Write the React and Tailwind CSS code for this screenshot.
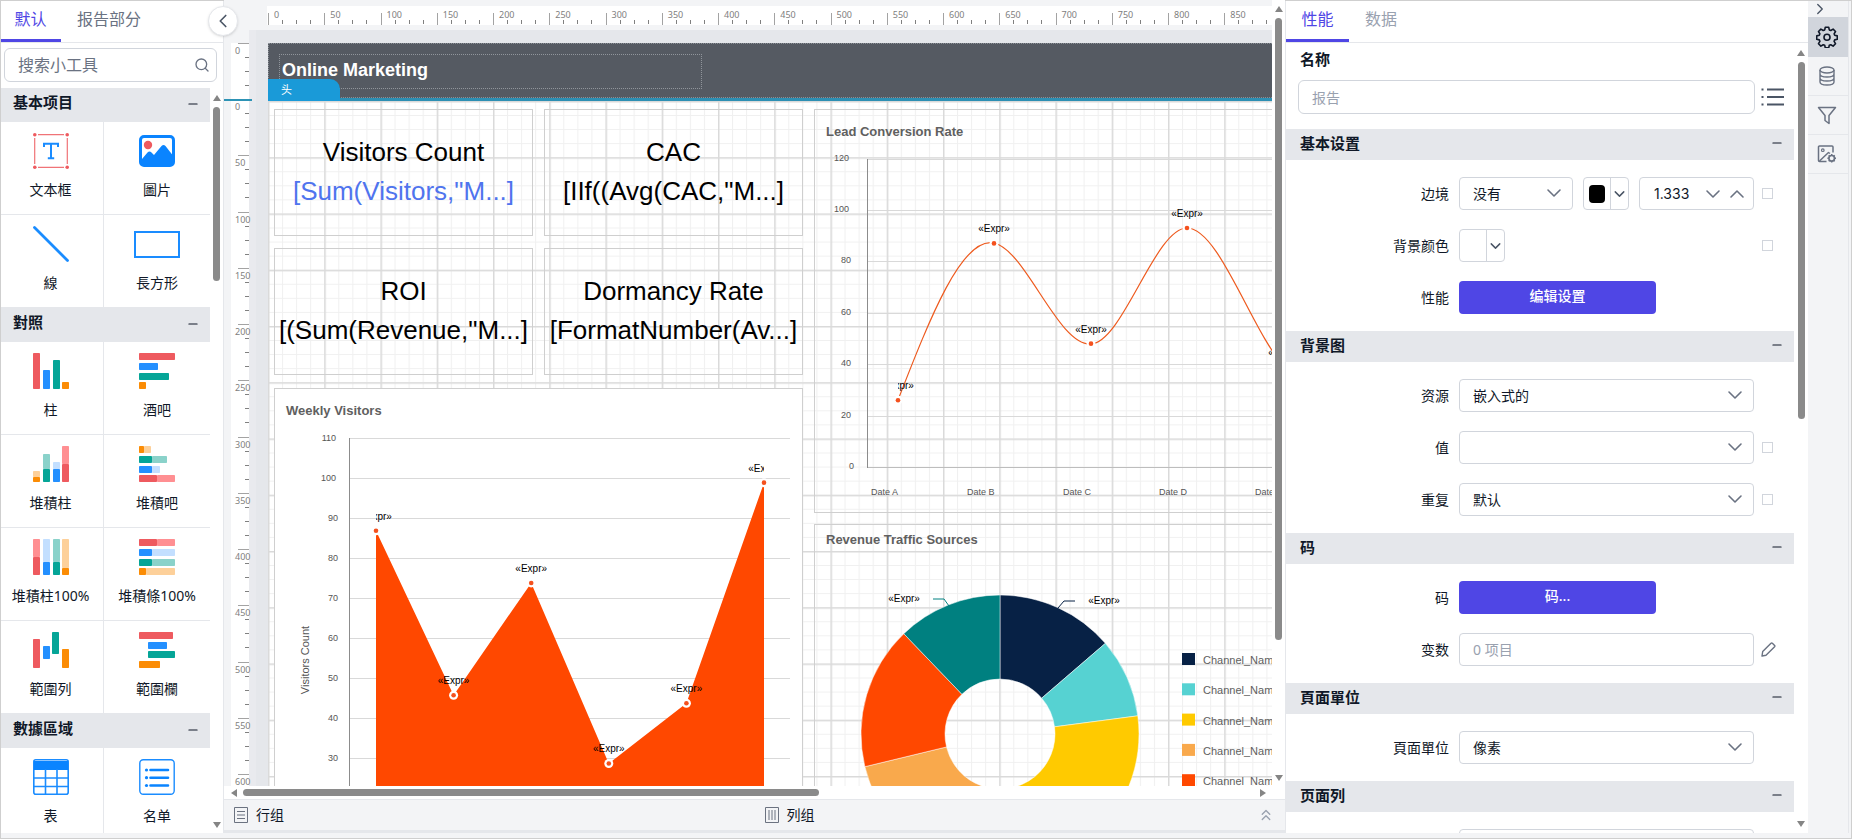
import { ChevronDown, ChevronLeft, ChevronRight, ChevronUp, ChevronsUp, Minus, Search } from 'lucide-react'

const RED = '#ee5a5f'
const RED_SOFT = '#ff8f92'
const BLUE = '#2490ff'
const BLUE_SOFT = '#c3dfff'
const TEAL = '#05a597'
const TEAL_SOFT = '#8ad2ca'
const AMBER = '#fb8c05'
const AMBER_SOFT = '#fdd09a'

// [x, y, width, height, color]
const bars = {
  column: [[0, 0, 7, 36, RED], [10, 17, 7, 19, BLUE], [20, 7, 7, 29, TEAL], [29, 29, 7, 7, AMBER]],
  bar: [[0, 0, 36, 7, RED], [0, 10, 19, 7, BLUE], [0, 20, 30, 7, TEAL], [0, 29, 7, 7, AMBER]],
  stackedColumn: [
    [0, 25, 7, 6, AMBER_SOFT], [0, 31, 7, 5, AMBER],
    [10, 8, 7, 15, TEAL_SOFT], [10, 23, 7, 13, TEAL],
    [20, 16, 7, 7, BLUE_SOFT], [20, 23, 7, 13, BLUE],
    [29, 0, 7, 18, RED_SOFT], [29, 18, 7, 18, RED],
  ],
  stackedBar: [
    [0, 0, 5, 7, AMBER], [5, 0, 7, 7, AMBER_SOFT],
    [0, 10, 13, 7, TEAL], [13, 10, 15, 7, TEAL_SOFT],
    [0, 20, 13, 7, BLUE], [13, 20, 8, 7, BLUE_SOFT],
    [0, 29, 18, 7, RED], [18, 29, 18, 7, RED_SOFT],
  ],
  fullColumn: [
    [0, 0, 7, 18, RED_SOFT], [0, 18, 7, 18, RED],
    [10, 0, 7, 23, BLUE_SOFT], [10, 23, 7, 13, BLUE],
    [20, 0, 7, 23, TEAL_SOFT], [20, 23, 7, 13, TEAL],
    [29, 0, 7, 29, AMBER_SOFT], [29, 29, 7, 7, AMBER],
  ],
  fullBar: [
    [0, 0, 18, 7, RED], [18, 0, 18, 7, RED_SOFT],
    [0, 10, 13, 7, BLUE], [13, 10, 23, 7, BLUE_SOFT],
    [0, 20, 13, 7, TEAL], [13, 20, 23, 7, TEAL_SOFT],
    [0, 29, 7, 7, AMBER], [7, 29, 29, 7, AMBER_SOFT],
  ],
  rangeColumn: [[0, 7, 7, 29, RED], [10, 14, 7, 13, BLUE], [19, 0, 7, 22, TEAL], [29, 17, 7, 19, AMBER]],
  rangeBar: [[0, 0, 34, 7, RED], [9, 10, 19, 7, BLUE], [9, 19, 27, 7, TEAL], [0, 29, 21, 7, AMBER]],
}

function BarsIcon({ kind }) {
  return (
    <svg className="h-9 w-9" viewBox="0 0 36 36">
      {bars[kind].map(([x, y, w, h, fill], i) => (
        <rect key={i} x={x} y={y} width={w} height={h} rx="0.8" fill={fill} />
      ))}
    </svg>
  )
}

function TextBoxIcon() {
  return (
    <svg className="h-9 w-9" viewBox="0 0 36 36">
      <g stroke="#f07377" strokeWidth="1.2">
        <path d="M5 1.7h26M5 34.3h26M1.7 5v26M34.3 5v26" />
      </g>
      <g fill="#ee5a5f">
        <circle cx="1.8" cy="1.8" r="1.8" />
        <circle cx="34.2" cy="1.8" r="1.8" />
        <circle cx="1.8" cy="34.2" r="1.8" />
        <circle cx="34.2" cy="34.2" r="1.8" />
      </g>
      <path d="M11 14v-3.2h14V14M18 10.800v14.400M14.800 25.200h6.400" fill="none" stroke="#1a8cff" strokeWidth="2" />
    </svg>
  )
}

function ImageIcon() {
  return (
    <svg className="h-9 w-9" viewBox="0 0 36 36">
      <rect x="1.5" y="3.5" width="33" height="29" rx="3.5" fill="#fff" stroke="#0a84ff" strokeWidth="3" />
      <circle cx="9" cy="12" r="4.2" fill="#ee5a5f" />
      <path d="M3 26l5.500-6.500q2-2 4 0l2.500 2.500 7.500-9q2-2 4 0l7 9V32H3z" fill="#0a84ff" />
    </svg>
  )
}

function LineIcon() {
  return (
    <svg className="h-9 w-9" viewBox="0 0 36 36">
      <path d="M1.500 1.500l33 33" stroke="#1a8cff" strokeWidth="2.8" strokeLinecap="round" />
    </svg>
  )
}

function RectIcon() {
  return (
    <svg className="h-9 w-[46px]" viewBox="0 0 46 36">
      <rect x="1" y="6" width="44" height="25" fill="none" stroke="#1a8cff" strokeWidth="2" />
    </svg>
  )
}

function TableIcon() {
  return (
    <svg className="h-9 w-9" viewBox="0 0 36 36">
      <rect x="0.8" y="0.8" width="34.4" height="34.4" rx="2" fill="#fff" stroke="#1a8cff" strokeWidth="1.6" />
      <path d="M1 2h34v9H1z" fill="#0a84ff" />
      <path d="M1 19h34M1 27.500h34M12.500 10v25M24 10v25" stroke="#1a8cff" strokeWidth="1.6" />
    </svg>
  )
}

function ListIcon() {
  return (
    <svg className="h-9 w-9" viewBox="0 0 36 36">
      <rect x="0.8" y="0.8" width="34.4" height="34.4" rx="3.5" fill="#fff" stroke="#1a8cff" strokeWidth="1.4" />
      <path d="M11.500 11h17.500M11.500 18.700h17.500M11.500 26.500h17.500" stroke="#0a84ff" strokeWidth="2.6" strokeLinecap="round" />
      <g fill="#0a84ff">
        <circle cx="7.500" cy="11" r="1.600" />
        <circle cx="7.500" cy="18.700" r="1.600" />
        <circle cx="7.500" cy="26.500" r="1.600" />
      </g>
    </svg>
  )
}

const toolGroups = [
  {
    title: '基本项目',
    items: [
      { label: '文本框', icon: <TextBoxIcon /> },
      { label: '圖片', icon: <ImageIcon /> },
      { label: '線', icon: <LineIcon /> },
      { label: '長方形', icon: <RectIcon /> },
    ],
  },
  {
    title: '對照',
    items: [
      { label: '柱', icon: <BarsIcon kind="column" /> },
      { label: '酒吧', icon: <BarsIcon kind="bar" /> },
      { label: '堆積柱', icon: <BarsIcon kind="stackedColumn" /> },
      { label: '堆積吧', icon: <BarsIcon kind="stackedBar" /> },
      { label: '堆積柱100%', icon: <BarsIcon kind="fullColumn" /> },
      { label: '堆積條100%', icon: <BarsIcon kind="fullBar" /> },
      { label: '範圍列', icon: <BarsIcon kind="rangeColumn" /> },
      { label: '範圍欄', icon: <BarsIcon kind="rangeBar" /> },
    ],
  },
  {
    title: '數據區域',
    items: [
      { label: '表', icon: <TableIcon /> },
      { label: '名单', icon: <ListIcon /> },
    ],
  },
]

function Arrow({ dir }) {
  const d = {
    up: 'M4 1l4 6H0z',
    down: 'M4 7L0 1h8z',
    left: 'M1 4l6-4v8z',
    right: 'M7 4L1 0v8z',
  }[dir]
  return (
    <svg className="h-2 w-2 shrink-0" viewBox="0 0 8 8" fill="#858585">
      <path d={d} />
    </svg>
  )
}

function VScroll({ thumb, className }) {
  return (
    <div className={`flex shrink-0 flex-col items-center bg-white ${className}`} aria-hidden="true">
      <Arrow dir="up" />
      <div className={`mt-[5px] w-[7px] rounded-full bg-[#8a8a8a] ${thumb}`} />
      <div className="flex-1" />
      <Arrow dir="down" />
    </div>
  )
}

function Tab({ active, muted, className, children }) {
  return (
    <button
      type="button"
      role="tab"
      aria-selected={Boolean(active)}
      className={`h-[42px] border-b-[3px] pb-0.5 text-base ${className} ${
        active ? 'border-[#4f46e5] text-[#4f46e5]' : `border-transparent ${muted ? 'text-gray-400' : 'text-gray-500'}`
      }`}
    >
      {children}
    </button>
  )
}

function Toolbox() {
  return (
    <aside className="flex w-[224px] shrink-0 flex-col border-r border-gray-200 bg-white">
      <div role="tablist" className="flex h-[43px] shrink-0 border-b border-gray-200">
        <Tab active className="w-[61px]">默认</Tab>
        <Tab className="px-4">报告部分</Tab>
      </div>
      <label className="mx-1 mt-[5px] mb-1.5 flex h-[34px] w-[213px] shrink-0 items-center rounded-md border border-gray-300 pr-1.5 pl-[13px]">
        <input
          type="text"
          aria-label="搜索小工具"
          placeholder="搜索小工具"
          className="min-w-0 flex-1 text-base outline-none placeholder:text-gray-500"
        />
        <Search className="h-4 w-4 text-gray-500" />
      </label>
      <div className="flex min-h-0 flex-1">
        <div className="min-w-0 flex-1 overflow-hidden">
          {toolGroups.map((group) => (
            <section key={group.title}>
              <button type="button" className="flex h-[34px] w-full items-center justify-between bg-gray-200 pr-2.5 pb-1.5 pl-[13px] text-[15px] font-bold text-gray-900">
                {group.title}
                <Minus className="mt-1 h-[14px] w-[14px]" />
              </button>
              <div className="grid grid-cols-[104px_1fr]">
                {group.items.map((item, i) => (
                  <button
                    type="button"
                    key={item.label}
                    className={`flex h-[93px] flex-col items-center border-b border-gray-200 pt-[11px] text-sm text-gray-900 ${i % 2 ? '' : 'border-r pr-0.5'}`}
                  >
                    {item.icon}
                    <span className="mt-[11px]">{item.label}</span>
                  </button>
                ))}
              </div>
            </section>
          ))}
        </div>
        <VScroll className="w-[13px] pt-1.5 pb-1" thumb="h-[174px]" />
      </div>
    </aside>
  )
}

/* ---------- design surface ---------- */

// 50 report units on screen
const STEP = 56.25

function TopRuler() {
  const marks = Array.from({ length: 18 }, (_, i) => i)
  return (
    <svg className="h-[30px] w-full shrink-0 bg-gray-100" fontFamily='"Noto Sans", sans-serif'>
      <rect x="43" y="6" width="100%" height="19" fill="#fff" />
      {marks.map((m) => {
        const x = 44 + m * STEP
        return (
          <g key={m}>
            <rect x={Math.round(x)} y="13" width="1" height="12" fill="#a3a3a3" />
            {[1, 2, 3].map((q) => (
              <rect key={q} x={Math.round(x + (q * STEP) / 4)} y="20" width="1" height="4" fill="#808080" />
            ))}
            <text x={x + 6} y="18" fontSize="9" fill="#808080">{m * 50}</text>
          </g>
        )
      })}
    </svg>
  )
}

function RulerBand({ top, count }) {
  return Array.from({ length: count }, (_, m) => {
    const y = top + m * STEP
    return (
      <g key={m}>
        <rect x="14" y={Math.round(y)} width="11" height="1" fill="#a3a3a3" />
        {[1, 2, 3].map((q) => (
          <rect key={q} x="21" y={Math.round(y + (q * STEP) / 4)} width="4" height="1" fill="#808080" />
        ))}
        <text x="11" y={y + 11} fontSize="9" fill="#808080">{m * 50}</text>
      </g>
    )
  })
}

function LeftRuler() {
  return (
    <svg className="h-full w-8 shrink-0 bg-gray-100" fontFamily='"Noto Sans", sans-serif'>
      <rect x="7" y="13" width="18" height="100%" fill="#fff" />
      <rect x="25" y="0" width="7" height="100%" fill="#e9eaee" />
      <RulerBand top={13} count={1} />
      <RulerBand top={69} count={13} />
      <rect x="0" y="69" width="28" height="2" fill="#2d93b5" />
    </svg>
  )
}

function Grid() {
  return (
    <svg className="absolute inset-0 h-full w-full">
      <defs>
        <pattern id="minor" width={STEP / 4} height={STEP / 4} patternUnits="userSpaceOnUse">
          <path d={`M0 0.5H${STEP / 4}M0.5 0V${STEP / 4}`} stroke="#f0f0f0" />
        </pattern>
        <pattern id="major" width={STEP} height={STEP} patternUnits="userSpaceOnUse">
          <path d={`M0 0.5H${STEP}M0.5 0V${STEP}`} stroke="#dadada" strokeWidth="2" />
        </pattern>
      </defs>
      <rect width="100%" height="100%" fill="url(#minor)" />
      <rect width="100%" height="100%" fill="url(#major)" />
    </svg>
  )
}

function Kpi({ title, value, className, valueClass = 'text-black' }) {
  return (
    <div className={`absolute flex h-[127px] w-[259px] flex-col items-center justify-center border border-[#cfcfcf] pb-0.5 text-[26px] leading-[39px] whitespace-nowrap text-black ${className}`}>
      <span>{title}</span>
      <span className={valueClass}>{value}</span>
    </div>
  )
}

function Marker({ x, y }) {
  return (
    <>
      <circle cx={x} cy={y} r="4.500" fill="#fff" />
      <circle cx={x} cy={y} r="2.300" fill="#f4511e" />
    </>
  )
}

function ExprLabel({ x, y }) {
  return <text x={x} y={y} fontSize="10" textAnchor="middle" fill="#000">«Expr»</text>
}

function WeeklyVisitors() {
  const yOf = (v) => 49.5 + (110 - v) * 4.012
  const values = [87, 46, 74, 29, 44, 99]
  const points = values.map((v, i) => ({ x: 101 + i * 77.6, y: yOf(v) }))
  const area = `M101 450L${points.map((p) => `${p.x} ${p.y}`).join('L')}L489 450Z`
  return (
    <div className="absolute top-[345px] left-[6px] h-[440px] w-[529px] border border-[#cfcfcf] bg-white">
      <h3 className="absolute top-3 left-[11px] text-[13px] font-bold text-[#606060]">Weekly Visitors</h3>
      <svg className="h-full w-full">
        <clipPath id="weekly-plot">
          <rect x="101" y="20" width="388" height="420" />
        </clipPath>
        {[110, 100, 90, 80, 70, 60, 50, 40, 30].map((v) => (
          <g key={v}>
            <rect x="75" y={Math.round(yOf(v)) - 1} width="440" height="1" fill="#d9d9d9" />
            <text x={v > 99 ? 61 : 63} y={yOf(v) + 2} fontSize="9" textAnchor="end" fill="#555">{v}</text>
          </g>
        ))}
        <rect x="74" y="49" width="1" height="400" fill="#8c8c8c" />
        <path d={area} fill="#ff4800" />
        {points.map((p) => <Marker key={p.x} x={p.x} y={p.y} />)}
        <g clipPath="url(#weekly-plot)">
          {points.map((p) => <ExprLabel key={p.x} x={p.x} y={p.y - 11} />)}
        </g>
        <text x="-271" y="34" fontSize="11" textAnchor="middle" fill="#555" transform="rotate(-90)">Visitors Count</text>
      </svg>
    </div>
  )
}

function LeadConversion() {
  const yOf = (v) => 357 - v * 2.57
  const points = [
    { x: 83, y: yOf(26) },
    { x: 179, y: yOf(87) },
    { x: 276, y: yOf(48) },
    { x: 372, y: yOf(93) },
    { x: 469, y: yOf(39) },
  ]
  return (
    <div className="absolute top-[66px] left-[546px] h-[404px] w-[530px] border border-[#cfcfcf]">
      <h3 className="absolute top-3 left-[11px] text-[13px] font-bold text-[#606060]">Lead Conversion Rate</h3>
      <svg className="h-full w-full">
        <clipPath id="lead-plot">
          <rect x="83" y="20" width="440" height="360" />
        </clipPath>
        {[120, 100, 80, 60, 40, 20, 0].map((v) => (
          <g key={v}>
            <rect x="53" y={Math.round(yOf(v))} width="470" height="1" fill={v ? '#d9d9d9' : '#bdbdbd'} />
            <text x={v > 99 ? 34 : v > 9 ? 36 : 39} y={yOf(v) + 2} fontSize="9" textAnchor="end" fill="#555">{v}</text>
          </g>
        ))}
        <rect x="52" y="49" width="1" height="309" fill="#8c8c8c" />
        <path
          d="M83 290C115 208 147 126 179 133C211 140 243 236 276 234C308 232 340 118 372 118C404 118 437 222 469 256"
          fill="none"
          stroke="#ee5a1e"
          strokeWidth="1.200"
        />
        {points.map((p) => <Marker key={p.x} x={p.x} y={p.y} />)}
        <g clipPath="url(#lead-plot)">
          {points.map((p) => <ExprLabel key={p.x} x={p.x} y={p.y - 11} />)}
        </g>
        {['A', 'B', 'C', 'D', 'E'].map((name, i) => (
          <text key={name} x={56 + i * 96} y="385" fontSize="9" fill="#555">{`Date ${name}`}</text>
        ))}
      </svg>
    </div>
  )
}

const slices = [
  { from: 0, to: 49.3, fill: '#072145' },
  { from: 49.3, to: 82.5, fill: '#56d2d2' },
  { from: 82.5, to: 200, fill: '#ffca00' },
  { from: 200, to: 256.4, fill: '#f9a94c' },
  { from: 256.4, to: 316.2, fill: '#ff4800' },
  { from: 316.2, to: 360, fill: '#008080' },
]

function slicePath(cx, cy, outer, inner, from, to) {
  const at = (r, deg) => {
    const a = (deg * Math.PI) / 180
    return `${cx + r * Math.sin(a)} ${cy - r * Math.cos(a)}`
  }
  return `M${at(outer, from)}A${outer} ${outer} 0 0 1 ${at(outer, to)}L${at(inner, to)}A${inner} ${inner} 0 0 0 ${at(inner, from)}Z`
}

function TrafficSources() {
  return (
    <div className="absolute top-[481px] left-[546px] h-[404px] w-[530px] border border-[#cfcfcf]">
      <h3 className="absolute top-[5px] left-[11px] text-[13px] font-bold text-[#606060]">Revenue Traffic Sources</h3>
      <svg className="h-full w-full">
        {slices.map((s) => (
          <path key={s.fill} d={slicePath(185, 209, 139, 55, s.from, s.to)} fill={s.fill} stroke="#fff" strokeWidth="0.500" />
        ))}
        <path d="M118 74h11l5 7" fill="none" stroke="#008080" />
        <path d="M243 83l6-7h11" fill="none" stroke="#072145" />
        <ExprLabel x={89} y={77} />
        <ExprLabel x={289} y={79} />
        {slices.slice(0, 5).map((s, i) => (
          <g key={s.fill}>
            <rect x="367" y={128 + i * 30.3} width="13" height="12" fill={s.fill} />
            <text x="388" y={139 + i * 30.3} fontSize="11" fill="#606060">Channel_Name</text>
          </g>
        ))}
      </svg>
    </div>
  )
}

function DesignSurface() {
  return (
    <div className="relative min-w-0 flex-1 overflow-hidden bg-gray-200 font-['Liberation_Sans',Arial,sans-serif]">
      <div className="absolute top-[13px] left-3 h-[900px] w-[1100px] bg-white">
        <div className="absolute inset-x-0 top-0 h-[58px] border-b-[3px] border-[#2d8fb3] bg-[#555a62]">
          <div className="h-full border-y border-l border-dotted border-[#8b9096]" />
          <div className="absolute top-[11px] left-[11px] flex h-[35px] w-[423px] items-center border border-dotted border-[#90959b] pb-[3px] pl-0.5 text-lg font-bold text-white">
            Online Marketing
          </div>
          <div className="absolute top-9 left-0 h-[22px] w-[72px] rounded-tr-[10px] bg-[#1a9ad8] pl-[13px] font-['Noto_Sans_CJK_SC',sans-serif] text-[11px] leading-5 text-white">
            头
          </div>
        </div>
        <div className="absolute inset-x-0 top-[58px] bottom-0">
          <Grid />
        </div>
        <Kpi title="Visitors Count" value={'[Sum(Visitors,"M...]'} className="top-[66px] left-[6px]" valueClass="text-[#4f74ee]" />
        <Kpi title="CAC" value={'[IIf((Avg(CAC,"M...]'} className="top-[66px] left-[276px]" />
        <Kpi title="ROI" value={'[(Sum(Revenue,"M...]'} className="top-[205px] left-[6px]" />
        <Kpi title="Dormancy Rate" value="[FormatNumber(Av...]" className="top-[205px] left-[276px]" />
        <WeeklyVisitors />
        <LeadConversion />
        <TrafficSources />
      </div>
    </div>
  )
}

function GroupBar() {
  return (
    <div className="flex h-[31px] shrink-0 border-t border-gray-200 bg-gray-100 text-sm text-gray-900">
      <div className="flex w-1/2 items-center gap-2 pl-2.5">
        <svg className="h-4 w-[14px]" viewBox="0 0 14 16" fill="none" stroke="#6b7280">
          <path d="M0.500 0.500h13v15h-13zM3 4.500h8M3 8h8M3 11.500h8" />
        </svg>
        行组
      </div>
      <div className="flex w-1/2 items-center gap-2 pr-2.5 pl-2.5">
        <svg className="h-4 w-[14px]" viewBox="0 0 14 16" fill="none" stroke="#6b7280">
          <path d="M0.500 0.500h13v15h-13zM4 3v10M7 3v10M10 3v10" />
        </svg>
        <span className="flex-1">列组</span>
        <button type="button" aria-label="展开">
          <ChevronsUp className="h-[18px] w-[18px] text-gray-400" strokeWidth={1.8} />
        </button>
      </div>
    </div>
  )
}

function Designer() {
  return (
    <main className="relative flex min-w-0 flex-1 flex-col bg-gray-100">
      <button
        type="button"
        aria-label="收起"
        className="absolute top-1.5 -left-4 flex h-[30px] w-[30px] items-center justify-center rounded-full border border-gray-200 bg-white text-gray-600 shadow-sm"
      >
        <ChevronLeft className="h-[22px] w-[22px]" strokeWidth={1.8} />
      </button>
      <div className="flex min-h-0 flex-1">
        <div className="flex min-w-0 flex-1 flex-col">
          <TopRuler />
          <div className="flex min-h-0 flex-1">
            <LeftRuler />
            <DesignSurface />
          </div>
        </div>
        <VScroll className="w-[13px] pt-[5px] pb-1" thumb="h-[622px]" />
      </div>
      <div className="flex h-[13px] shrink-0 items-center bg-white pr-[18px] pl-1.5" aria-hidden="true">
        <Arrow dir="left" />
        <div className="ml-[5px] h-[7px] w-[576px] rounded-full bg-[#8a8a8a]" />
        <div className="flex-1" />
        <Arrow dir="right" />
      </div>
      <GroupBar />
      <div className="h-[3px] shrink-0 bg-gray-200" />
    </main>
  )
}

/* ---------- properties ---------- */

function Section({ title, children }) {
  return (
    <section>
      <button type="button" className="flex h-[31px] w-full items-center justify-between bg-gray-200 pr-2.5 pb-[3px] pl-[14px] text-[15px] font-bold text-gray-900">
        {title}
        <Minus className="h-[14px] w-[14px]" />
      </button>
      <div className="flex flex-col gap-[19px] py-[17px]">{children}</div>
    </section>
  )
}

function Row({ label, htmlFor, tick, after, children }) {
  return (
    <div className="flex h-[33px] items-center">
      <label htmlFor={htmlFor} className="w-[163px] shrink-0 text-right text-sm text-gray-900">{label}</label>
      <div className="ml-2.5 flex h-full w-[295px] gap-2.5">{children}</div>
      {tick && (
        <input
          type="checkbox"
          aria-label={`${label} 表达式`}
          className="ml-2 h-[11px] w-[11px] appearance-none border border-gray-300 bg-white"
        />
      )}
      {after}
    </div>
  )
}

function SelectBox({ id, label, options, className }) {
  return (
    <div className={`relative h-full ${className}`}>
      <select id={id} aria-label={label} className="h-full w-full appearance-none rounded border border-gray-300 bg-white pr-8 pl-[13px] text-sm text-gray-900">
        {options.map((o) => <option key={o}>{o}</option>)}
      </select>
      <ChevronDown className="pointer-events-none absolute top-1 right-[7px] h-6 w-6 text-gray-500" strokeWidth={1.6} />
    </div>
  )
}

function ColorButton({ id, swatch, label }) {
  return (
    <button type="button" id={id} aria-label={label} className="flex h-full w-[46px] items-center rounded border border-gray-300 bg-white">
      <span className="flex h-full w-[27px] shrink-0 items-center justify-center border-r border-gray-300">
        <span className={`h-[18px] w-4 rounded ${swatch}`} />
      </span>
      <ChevronDown className="h-[18px] w-[17px] text-gray-600" />
    </button>
  )
}

function PrimaryButton({ id, children }) {
  return (
    <button type="button" id={id} className="h-full w-[197px] rounded bg-[#4f46e5] pb-[3px] text-sm font-medium text-white">
      {children}
    </button>
  )
}

function Properties() {
  return (
    <aside className="flex w-[523px] shrink-0 flex-col border-l border-gray-200 bg-white">
      <div role="tablist" className="flex h-[43px] shrink-0 border-b border-gray-200">
        <Tab active className="w-[63px]">性能</Tab>
        <Tab muted className="px-4">数据</Tab>
      </div>
      <div className="flex min-h-0 flex-1">
        <div className="w-[508px] overflow-hidden">
          <div className="pt-1 pr-2 pb-[15px] pl-3">
            <label htmlFor="report-name" className="ml-0.5 block text-[15px] leading-6 font-bold text-gray-900">名称</label>
            <div className="mt-[9px] flex items-center gap-1.5">
              <input
                id="report-name"
                type="text"
                placeholder="报告"
                className="h-[34px] w-[457px] shrink-0 rounded-md border border-gray-300 px-[13px] text-sm outline-none placeholder:text-gray-400"
              />
              <button type="button" aria-label="列表" className="text-gray-600">
                <svg className="h-[18px] w-6" viewBox="0 0 24 18" stroke="currentColor" strokeWidth="1.800">
                  <path d="M6 1.500h17M6 9h17M6 16.500h17M0.500 1.500h2M0.500 9h2M0.500 16.500h2" />
                </svg>
              </button>
            </div>
          </div>
          <Section title="基本设置">
            <Row label="边境" htmlFor="border-style" tick>
              <SelectBox id="border-style" options={['没有']} className="w-[114px]" />
              <ColorButton label="边境颜色" swatch="bg-black" />
              <div className="flex h-full w-[115px] items-center rounded border border-gray-300 pr-1 pl-[14px]">
                <input
                  type="text"
                  aria-label="边境宽度"
                  defaultValue="1.333"
                  className="w-full min-w-0 flex-1 font-['Inter',sans-serif] text-sm text-gray-900 outline-none"
                />
                <button type="button" aria-label="减少" className="shrink-0"><ChevronDown className="h-6 w-6 text-gray-500" strokeWidth={1.6} /></button>
                <button type="button" aria-label="增加" className="shrink-0"><ChevronUp className="h-6 w-6 text-gray-500" strokeWidth={1.6} /></button>
              </div>
            </Row>
            <Row label="背景颜色" htmlFor="bg-color" tick>
              <ColorButton id="bg-color" label="背景颜色" swatch="bg-transparent" />
            </Row>
            <Row label="性能" htmlFor="edit-settings">
              <PrimaryButton id="edit-settings">编辑设置</PrimaryButton>
            </Row>
          </Section>
          <Section title="背景图">
            <Row label="资源" htmlFor="bg-source">
              <SelectBox id="bg-source" options={['嵌入式的']} className="w-full" />
            </Row>
            <Row label="值" htmlFor="bg-value" tick>
              <SelectBox id="bg-value" options={['']} className="w-full" />
            </Row>
            <Row label="重复" htmlFor="bg-repeat" tick>
              <SelectBox id="bg-repeat" options={['默认']} className="w-full" />
            </Row>
          </Section>
          <Section title="码">
            <Row label="码" htmlFor="code">
              <PrimaryButton id="code">码...</PrimaryButton>
            </Row>
            <Row
              label="变数"
              htmlFor="variables"
              after={
                <button type="button" aria-label="编辑变数" className="ml-[7px] text-gray-500">
                  <svg className="h-[15px] w-[15px]" viewBox="0 0 15 15" fill="none" stroke="currentColor" strokeWidth="1.400" strokeLinejoin="round">
                    <path d="M1 14l0.700-4.500L10 1.200q0.700-0.600 1.400 0l2.200 2.200q0.600 0.700 0 1.400L5 13.200z" />
                  </svg>
                </button>
              }
            >
              <input
                id="variables"
                type="text"
                placeholder="0 项目"
                className="h-full w-full rounded border border-gray-300 px-[13px] text-sm outline-none placeholder:text-gray-400"
              />
            </Row>
          </Section>
          <Section title="頁面單位">
            <Row label="頁面單位" htmlFor="page-unit">
              <SelectBox id="page-unit" options={['像素']} className="w-full" />
            </Row>
          </Section>
          <Section title="页面列">
            <Row>
              <SelectBox label="页面列" options={['']} className="w-full" />
            </Row>
          </Section>
        </div>
        <VScroll className="w-[14px] pt-1.5 pb-[5px]" thumb="h-[357px]" />
      </div>
    </aside>
  )
}

function ImageSettingsIcon() {
  return (
    <svg className="h-5 w-5" viewBox="0 0 20 20" fill="none" stroke="currentColor" strokeWidth="1.500" strokeLinejoin="round">
      <path d="M9.500 17.500H2.500a1 1 0 0 1-1-1V3a1 1 0 0 1 1-1h12.500a1 1 0 0 1 1 1v5.500" />
      <path d="M2.500 17L11.500 8.500l1.500 1" />
      <circle cx="5.800" cy="6.200" r="1.300" strokeWidth="1.200" />
      <circle cx="14.700" cy="14.300" r="2.800" strokeWidth="1.700" />
      <path d="M14.700 10v1.500M14.700 17.100v1.500M10.400 14.300h1.500M17.500 14.300h1.500M11.700 11.300l1 1M16.700 16.300l1 1M17.700 11.300l-1 1M12.700 16.300l-1 1" />
    </svg>
  )
}

function DatabaseIcon() {
  return (
    <svg className="h-5 w-5" viewBox="0 0 20 20" fill="none" stroke="currentColor" strokeWidth="1.400">
      <ellipse cx="10" cy="4" rx="7" ry="3" />
      <path d="M3 4v12c0 1.700 3.100 3 7 3s7-1.300 7-3V4M3 8c0 1.700 3.100 3 7 3s7-1.300 7-3M3 12c0 1.700 3.100 3 7 3s7-1.300 7-3" />
    </svg>
  )
}

function GearIcon() {
  return (
    <svg className="h-[22px] w-[22px]" viewBox="0 0 22 22" fill="none" stroke="currentColor" strokeWidth="1.600" strokeLinejoin="round">
      <path d="M9.300 1.300h3.400l0.600 2.600 1.500 0.600 2.300-1.400 2.400 2.400-1.400 2.300 0.600 1.500 2.600 0.600v3.400l-2.600 0.600-0.600 1.500 1.400 2.300-2.400 2.400-2.300-1.400-1.500 0.600-0.600 2.600h-3.400l-0.600-2.600-1.500-0.600-2.300 1.400-2.400-2.400 1.400-2.300-0.600-1.500-2.600-0.600v-3.400l2.600-0.600 0.600-1.500-1.400-2.300 2.400-2.400 2.300 1.400 1.500-0.600z" />
      <circle cx="11" cy="11.300" r="3" />
    </svg>
  )
}

function SideStrip() {
  const item = 'flex h-[39px] w-full items-center justify-center border-b border-gray-200 pr-0.5 text-gray-500'
  return (
    <nav className="flex w-[41px] shrink-0 flex-col border-r border-gray-200 bg-gray-100">
      <button type="button" aria-label="收起面板" className="flex h-[17px] w-full items-center pl-[3px] text-gray-600">
        <ChevronRight className="h-[18px] w-[18px]" strokeWidth={1.8} />
      </button>
      <button type="button" aria-label="设置" className="flex h-10 w-full items-center justify-center bg-gray-300 pr-0.5 text-gray-900">
        <GearIcon />
      </button>
      <button type="button" aria-label="数据" className={item}><DatabaseIcon /></button>
      <button type="button" aria-label="过滤" className={item}>
        <svg className="h-5 w-5" viewBox="0 0 20 20" fill="none" stroke="currentColor" strokeWidth="1.500" strokeLinejoin="round">
          <path d="M1.500 2.500h17L12 10.500v8l-4-3v-5z" />
        </svg>
      </button>
      <button type="button" aria-label="图像设置" className={item}><ImageSettingsIcon /></button>
    </nav>
  )
}

export default function App() {
  return (
    <div className="h-screen overflow-hidden bg-gray-100 pr-[3px] pb-1.5 font-['Noto_Sans','Noto_Sans_CJK_SC',sans-serif] text-gray-900 outline -outline-offset-1 outline-[#cfcfcf]">
      <div className="flex h-full">
        <Toolbox />
        <Designer />
        <Properties />
        <SideStrip />
      </div>
    </div>
  )
}
